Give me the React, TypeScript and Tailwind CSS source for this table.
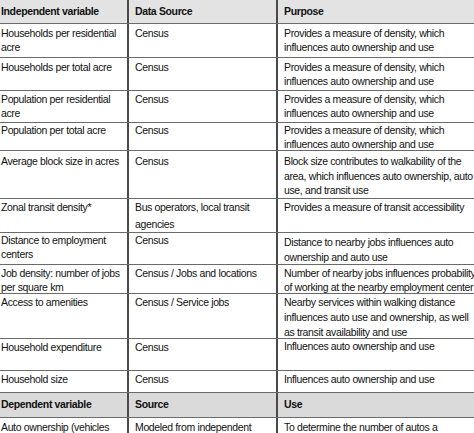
import React from "react";

type Cell = { lines: string[]; cls: string };
type Row = { h: string; bg: string; bold?: boolean; cells: [Cell, Cell, Cell] };

const P1 = ["Provides a measure of density, which", "influences auto ownership and use"];

const rows: Row[] = [
  {
    h: "h-[24px]",
    bg: "bg-[#e3e3e3]",
    bold: true,
    cells: [
      { lines: ["Independent variable"], cls: "pt-[4px] leading-[14px]" },
      { lines: ["Data Source"], cls: "pt-[4px] leading-[14px]" },
      { lines: ["Purpose"], cls: "pt-[4px] leading-[14px]" },
    ],
  },
  {
    h: "h-[34px]",
    bg: "bg-white",
    cells: [
      { lines: ["Households per residential", "acre"], cls: "pt-[2px] leading-[14px]" },
      { lines: ["Census"], cls: "pt-[2px] leading-[14px]" },
      { lines: P1, cls: "pt-[2px] leading-[14px]" },
    ],
  },
  {
    h: "h-[33px]",
    bg: "bg-white",
    cells: [
      { lines: ["Households per total acre"], cls: "pt-[2px] leading-[14px]" },
      { lines: ["Census"], cls: "pt-[2px] leading-[14px]" },
      { lines: P1, cls: "pt-[2px] leading-[14px]" },
    ],
  },
  {
    h: "h-[32px]",
    bg: "bg-white",
    cells: [
      { lines: ["Population per residential", "acre"], cls: "pt-[1px] leading-[14px]" },
      { lines: ["Census"], cls: "pt-[1px] leading-[14px]" },
      { lines: P1, cls: "pt-[1px] leading-[14px]" },
    ],
  },
  {
    h: "h-[28px]",
    bg: "bg-white",
    cells: [
      { lines: ["Population per total acre"], cls: "pt-0 leading-[14px]" },
      { lines: ["Census"], cls: "pt-0 leading-[14px]" },
      { lines: P1, cls: "pt-0 leading-[14px]" },
    ],
  },
  {
    h: "h-[48px]",
    bg: "bg-white",
    cells: [
      { lines: ["Average block size in acres"], cls: "pt-[3px] leading-[14.5px]" },
      { lines: ["Census"], cls: "pt-[3px] leading-[14.5px]" },
      {
        lines: [
          "Block size contributes to walkability of the",
          "area, which influences auto ownership, auto",
          "use, and transit use",
        ],
        cls: "pt-[3px] leading-[14.5px]",
      },
    ],
  },
  {
    h: "h-[34px]",
    bg: "bg-white",
    cells: [
      { lines: ["Zonal transit density*"], cls: "pt-[1px] leading-[14px]" },
      { lines: ["Bus operators, local transit", "agencies"], cls: "pt-0 leading-[17px]" },
      { lines: ["Provides a measure of transit accessibility"], cls: "pt-[1px] leading-[14px]" },
    ],
  },
  {
    h: "h-[32px]",
    bg: "bg-white",
    cells: [
      { lines: ["Distance to employment", "centers"], cls: "pt-0 leading-[14px]" },
      { lines: ["Census"], cls: "pt-0 leading-[14px]" },
      {
        lines: ["Distance to nearby jobs influences auto", "ownership and auto use"],
        cls: "pt-[2px] leading-[15px]",
      },
    ],
  },
  {
    h: "h-[29px]",
    bg: "bg-white",
    cells: [
      { lines: ["Job density: number of jobs", "per square km"], cls: "pt-[1px] leading-[14px]" },
      { lines: ["Census / Jobs and locations"], cls: "pt-[1px] leading-[14px]" },
      {
        lines: [
          "Number of nearby jobs influences probability",
          "of working at the nearby employment center",
        ],
        cls: "pt-[1px] leading-[14px]",
      },
    ],
  },
  {
    h: "h-[45px]",
    bg: "bg-white",
    cells: [
      { lines: ["Access to amenities"], cls: "pt-[1px] leading-[15px]" },
      { lines: ["Census / Service jobs"], cls: "pt-[1px] leading-[15px]" },
      {
        lines: [
          "Nearby services within walking distance",
          "influences auto use and ownership, as well",
          "as transit availability and use",
        ],
        cls: "pt-[1px] leading-[15px]",
      },
    ],
  },
  {
    h: "h-[32px]",
    bg: "bg-white",
    cells: [
      { lines: ["Household expenditure"], cls: "pt-[1px] leading-[14px]" },
      { lines: ["Census"], cls: "pt-[1px] leading-[14px]" },
      { lines: ["Influences auto ownership and use"], cls: "pt-0 leading-[14px]" },
    ],
  },
  {
    h: "h-[22px]",
    bg: "bg-white",
    cells: [
      { lines: ["Household size"], cls: "pt-[1px] leading-[14px]" },
      { lines: ["Census"], cls: "pt-[1px] leading-[14px]" },
      { lines: ["Influences auto ownership and use"], cls: "pt-[1px] leading-[14px]" },
    ],
  },
  {
    h: "h-[25px]",
    bg: "bg-[#dadada]",
    bold: true,
    cells: [
      { lines: ["Dependent variable"], cls: "pt-[4px] leading-[14px]" },
      { lines: ["Source"], cls: "pt-[4px] leading-[14px]" },
      { lines: ["Use"], cls: "pt-[4px] leading-[14px]" },
    ],
  },
  {
    h: "flex-1",
    bg: "bg-white",
    cells: [
      { lines: ["Auto ownership (vehicles"], cls: "pt-[2px] leading-[14px]" },
      { lines: ["Modeled from independent"], cls: "pt-[2px] leading-[14px]" },
      { lines: ["To determine the number of autos a"], cls: "pt-[2px] leading-[14px]" },
    ],
  },
];

function Lines({ lines }: { lines: string[] }) {
  return (
    <>
      {lines.map((l, i) => (
        <div key={i} className="whitespace-nowrap">
          {l}
        </div>
      ))}
    </>
  );
}

export default function App() {
  return (
    <div className="w-[474px] h-[433px] overflow-hidden bg-white flex flex-col font-['Liberation_Sans',Arial,sans-serif] text-[10.5px] tracking-[-0.36px] text-[#111111]">
      {rows.map((r, i) => {
        const last = i === rows.length - 1;
        return (
          <div
            key={i}
            className={`flex shrink-0 ${r.h} ${r.bg} ${r.bold ? "font-bold" : "font-normal"} ${
              last ? "" : "border-b border-[#6a6a6a]"
            }`}
          >
            <div className={`w-[129px] shrink-0 pl-[1px] border-r-2 border-[#4a4a4a] overflow-hidden ${r.cells[0].cls}`}>
              <Lines lines={r.cells[0].lines} />
            </div>
            <div className={`w-[149px] shrink-0 pl-[6px] border-r-2 border-[#4a4a4a] overflow-hidden ${r.cells[1].cls}`}>
              <Lines lines={r.cells[1].lines} />
            </div>
            <div className={`flex-1 pl-[6px] overflow-hidden ${r.cells[2].cls}`}>
              <Lines lines={r.cells[2].lines} />
            </div>
          </div>
        );
      })}
    </div>
  );
}
